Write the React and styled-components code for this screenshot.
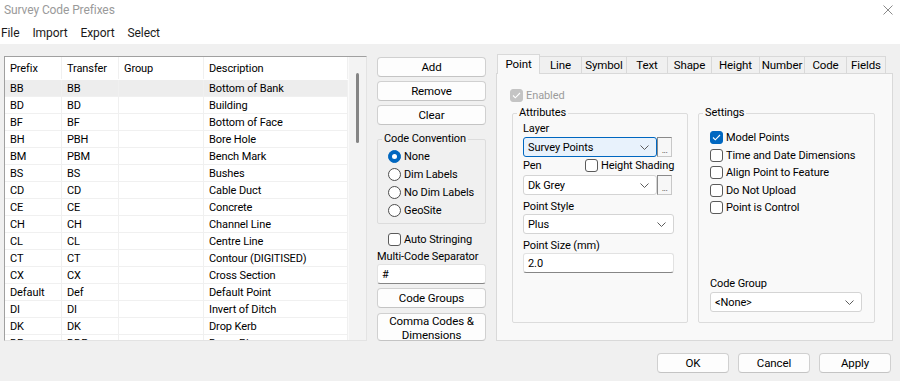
import React from "react";
import styled, { createGlobalStyle } from "styled-components";

const FONT = `"Segoe UI", Roboto, "Noto Sans", sans-serif`;

const GlobalStyle = createGlobalStyle`
  html, body {
    margin: 0;
    padding: 0;
    background: #f0f0f0;
  }
  * {
    box-sizing: border-box;
  }
`;

const rows = [
  ["BB", "BB", "", "Bottom of Bank"],
  ["BD", "BD", "", "Building"],
  ["BF", "BF", "", "Bottom of Face"],
  ["BH", "PBH", "", "Bore Hole"],
  ["BM", "PBM", "", "Bench Mark"],
  ["BS", "BS", "", "Bushes"],
  ["CD", "CD", "", "Cable Duct"],
  ["CE", "CE", "", "Concrete"],
  ["CH", "CH", "", "Channel Line"],
  ["CL", "CL", "", "Centre Line"],
  ["CT", "CT", "", "Contour (DIGITISED)"],
  ["CX", "CX", "", "Cross Section"],
  ["Default", "Def", "", "Default Point"],
  ["DI", "DI", "", "Invert of Ditch"],
  ["DK", "DK", "", "Drop Kerb"],
  ["DP", "DDP", "", "Down Pipe"],
];

const columns = [
  { label: "Prefix", width: 57 },
  { label: "Transfer", width: 57 },
  { label: "Group", width: 85 },
  { label: "Description", width: 144 },
];

const tabs = [
  { label: "Point", width: 43 },
  { label: "Line", width: 43 },
  { label: "Symbol", width: 46 },
  { label: "Text", width: 42 },
  { label: "Shape", width: 45 },
  { label: "Height", width: 49 },
  { label: "Number", width: 46 },
  { label: "Code", width: 43 },
  { label: "Fields", width: 40 },
];

const Window = styled.div`
  width: 900px;
  height: 381px;
  overflow: hidden;
  background: #f0f0f0;
  font-family: ${FONT};
  font-size: 11px;
  letter-spacing: -0.1px;
  color: #000;
  display: flex;
  flex-direction: column;
`;

const TitleBar = styled.div`
  height: 22px;
  background: #fff;
  display: flex;
  align-items: center;
  justify-content: space-between;
  padding: 0 7px 3px 4px;
  color: #9a9a9a;
  font-size: 12px;
`;

const MenuBar = styled.div`
  height: 22px;
  background: #fff;
  display: flex;
  align-items: center;
  gap: 13px;
  padding-left: 1px;
  font-size: 12px;
  color: #1a1a1a;
`;

const Body = styled.div`
  padding: 10px 0 0 4px;
  display: flex;
  flex-direction: column;
`;

const MainRow = styled.div`
  display: flex;
  align-items: flex-start;
  height: 287px;
`;

/* ---------- list ---------- */

const ListBox = styled.div`
  margin-top: 2px;
  width: 363px;
  height: 285px;
  background: #fff;
  border: 1px solid #e3e3e3;
  border-top-color: #a0a0a0;
  border-left-color: #a0a0a0;
  display: flex;
  overflow: hidden;
`;

const Table = styled.div`
  width: 343px;
  display: flex;
  flex-direction: column;
`;

const Row = styled.div`
  display: flex;
  flex: none;
  height: ${(p) => (p.$header ? 23 : 17)}px;
  background: ${(p) => (p.$selected ? "#ededed" : "#fff")};
  border-bottom: 1px solid ${(p) => (p.$header ? "transparent" : "#f0f0f0")};
`;

const Cell = styled.div`
  width: ${(p) => p.$w}px;
  flex: none;
  padding-left: 5px;
  display: flex;
  align-items: center;
  white-space: nowrap;
  overflow: hidden;
  border-right: 1px solid #f0f0f0;
`;

const ScrollBar = styled.div`
  width: 18px;
  flex: none;
  background: #f3f3f3;
  border-left: 1px solid #fafafa;
`;

const Thumb = styled.div`
  width: 3px;
  height: 70px;
  margin: 16px auto 0;
  border-radius: 2px;
  background: #858585;
`;

/* ---------- buttons and inputs ---------- */

const Button = styled.button`
  display: block;
  width: ${(p) => (p.$w ? `${p.$w}px` : "100%")};
  height: ${(p) => p.$h || 20}px;
  margin-top: ${(p) => p.$mt || 0}px;
  padding: 0;
  background: #fdfdfd;
  border: 1px solid #d0d0d0;
  border-bottom-color: #c4c4c4;
  border-radius: 4px;
  font-family: ${FONT};
  font-size: 11.5px;
  letter-spacing: -0.1px;
  line-height: 14px;
  color: #000;
  text-align: center;
`;

const TextBox = styled.div`
  height: 20px;
  width: ${(p) => (p.$w ? `${p.$w}px` : "100%")};
  background: #fff;
  border: 1px solid #e2e2e2;
  border-bottom-color: #868686;
  border-radius: 3px;
  padding-left: 4px;
  display: flex;
  align-items: center;
`;

const Combo = styled.div`
  height: 20px;
  width: ${(p) => p.$w}px;
  flex: none;
  background: ${(p) => (p.$focus ? "#e8f2fc" : "#fff")};
  border: 1px solid ${(p) => (p.$focus ? "#0067c0" : "#d4d4d4")};
  border-radius: 3px;
  padding: 0 7px 0 4px;
  display: flex;
  align-items: center;
  justify-content: space-between;
`;

const Chevron = () => (
  <svg width="9" height="5" viewBox="0 0 9 5">
    <polyline points="0.5,0.5 4.5,4.5 8.5,0.5" fill="none" stroke="#5c5c5c" strokeWidth="1" />
  </svg>
);

const DotsButton = styled.div`
  width: 15px;
  height: 20px;
  flex: none;
  background: #f7f7f7;
  border: 1px solid #8a8a8a;
  border-right-color: #c8c8c8;
  border-bottom-color: #c8c8c8;
  display: flex;
  align-items: flex-end;
  justify-content: center;
  font-size: 9px;
  line-height: 12px;
  letter-spacing: -0.5px;
  color: #333;
`;

const ComboRow = styled.div`
  display: flex;
  margin-top: ${(p) => p.$mt || 0}px;
`;

/* ---------- check and radio ---------- */

const Box = styled.span`
  width: 13px;
  height: 13px;
  flex: none;
  border-radius: 3px;
  border: 1px solid ${(p) => (p.$disabled ? "#c4c4c4" : p.$checked ? "#0067c0" : "#5a5a5a")};
  background: ${(p) => (p.$disabled ? "#c4c4c4" : p.$checked ? "#0067c0" : "#fff")};
  display: flex;
  align-items: center;
  justify-content: center;
`;

const CheckRow = styled.div`
  display: flex;
  align-items: center;
  gap: 3px;
  flex: none;
  height: ${(p) => p.$h || 17}px;
  margin-top: ${(p) => p.$mt || 0}px;
  padding-left: ${(p) => p.$pl || 0}px;
  color: ${(p) => (p.$disabled ? "#9c9c9c" : "#000")};
  white-space: nowrap;
`;

const Check = ({ checked, disabled, children, ...rest }) => (
  <CheckRow $disabled={disabled} {...rest}>
    <Box $checked={checked} $disabled={disabled}>
      {checked && (
        <svg width="9" height="7" viewBox="0 0 9 7">
          <polyline points="1,3.5 3.3,5.8 8,1" fill="none" stroke="#fff" strokeWidth="1.1" />
        </svg>
      )}
    </Box>
    <span>{children}</span>
  </CheckRow>
);

const Circle = styled.span`
  width: 13px;
  height: 13px;
  flex: none;
  border-radius: 50%;
  border: 1px solid ${(p) => (p.$on ? "#0067c0" : "#4d4d4d")};
  background: ${(p) => (p.$on ? "#0067c0" : "#fff")};
  display: flex;
  align-items: center;
  justify-content: center;

  &::after {
    content: "";
    display: ${(p) => (p.$on ? "block" : "none")};
    width: 5px;
    height: 5px;
    border-radius: 50%;
    background: #fff;
  }
`;

const Radio = ({ on, children }) => (
  <CheckRow $h={18}>
    <Circle $on={on} />
    <span>{children}</span>
  </CheckRow>
);

/* ---------- group boxes ---------- */

const Group = styled.fieldset`
  margin: ${(p) => p.$mt || 0}px 0 0;
  padding: 0;
  width: ${(p) => (p.$w ? `${p.$w}px` : "auto")};
  height: ${(p) => (p.$h ? `${p.$h}px` : "auto")};
  min-width: 0;
  border: 1px solid #dcdcdc;
  border-radius: 2px;
  display: flex;
  flex-direction: column;
`;

const Legend = styled.legend`
  margin-left: 4px;
  padding: 0 2px;
  line-height: 16px;
  font-size: 11px;
`;

const GroupBody = styled.div`
  flex: 1;
  display: flex;
  flex-direction: column;
  padding: 0 ${(p) => p.$pr || 0}px ${(p) => p.$pb || 0}px ${(p) => p.$pl || 0}px;
`;

const Label = styled.div`
  line-height: 15px;
  height: 15px;
  flex: none;
  margin-top: ${(p) => p.$mt || 0}px;
  white-space: nowrap;
`;

const PenLabel = styled.span`
  width: 59px;
  flex: none;
`;

/* ---------- middle column ---------- */

const Middle = styled.div`
  width: 109px;
  margin-left: 10px;
  padding-top: 3px;
  display: flex;
  flex-direction: column;
`;

/* ---------- tabs ---------- */

const RightCol = styled.div`
  width: 397px;
  margin-left: 10px;
  display: flex;
  flex-direction: column;
`;

const TabStrip = styled.div`
  height: 19px;
  display: flex;
  align-items: flex-end;
  padding-left: 2px;
`;

const Tab = styled.div`
  position: relative;
  width: ${(p) => p.$w}px;
  height: ${(p) => (p.$active ? 20 : 17)}px;
  margin-left: -1px;
  margin-bottom: ${(p) => (p.$active ? -1 : 0)}px;
  z-index: ${(p) => (p.$active ? 1 : 0)};
  background: ${(p) => (p.$active ? "#f9f9f9" : "#f0f0f0")};
  border: 1px solid #d9d9d9;
  border-bottom: none;
  display: flex;
  align-items: ${(p) => (p.$active ? "flex-start" : "center")};
  justify-content: center;
  padding-top: ${(p) => (p.$active ? 2 : 0)}px;
  font-size: 11.5px;
`;

const Panel = styled.div`
  height: 268px;
  background: #f9f9f9;
  border: 1px solid #d9d9d9;
  padding: 14px 0 0 13px;
`;

const GroupsRow = styled.div`
  display: flex;
  gap: 10px;
  margin: 3px 0 0 2px;
`;

const Spacer = styled.div`
  margin-top: auto;
`;

/* ---------- footer ---------- */

const Footer = styled.div`
  display: flex;
  justify-content: flex-end;
  gap: 9px;
  padding-right: 9px;
  margin-top: 12px;
`;

const CloseIcon = () => (
  <svg width="10" height="10" viewBox="0 0 10 10">
    <path d="M0.5 0.5 L9.5 9.5 M9.5 0.5 L0.5 9.5" stroke="#8a8a8a" strokeWidth="1" />
  </svg>
);

export default function App() {
  return (
    <>
      <GlobalStyle />
      <Window>
        <TitleBar>
          <span>Survey Code Prefixes</span>
          <CloseIcon />
        </TitleBar>
        <MenuBar>
          <span>File</span>
          <span>Import</span>
          <span>Export</span>
          <span>Select</span>
        </MenuBar>

        <Body>
          <MainRow>
            <ListBox>
              <Table>
                <Row $header>
                  {columns.map((c) => (
                    <Cell key={c.label} $w={c.width}>
                      {c.label}
                    </Cell>
                  ))}
                </Row>
                {rows.map((r, i) => (
                  <Row key={r[0]} $selected={i === 0}>
                    {r.map((v, j) => (
                      <Cell key={j} $w={columns[j].width}>
                        {v}
                      </Cell>
                    ))}
                  </Row>
                ))}
              </Table>
              <ScrollBar>
                <Thumb />
              </ScrollBar>
            </ListBox>

            <Middle>
              <Button>Add</Button>
              <Button $mt={4}>Remove</Button>
              <Button $mt={4}>Clear</Button>
              <Group $mt={6}>
                <Legend>Code Convention</Legend>
                <GroupBody $pl={10} $pb={4}>
                  <Radio on>None</Radio>
                  <Radio>Dim Labels</Radio>
                  <Radio>No Dim Labels</Radio>
                  <Radio>GeoSite</Radio>
                </GroupBody>
              </Group>
              <Check $mt={6} $h={18} $pl={11}>
                Auto Stringing
              </Check>
              <Label $mt={1}>Multi-Code Separator</Label>
              <TextBox>#</TextBox>
              <Button $mt={4}>Code Groups</Button>
              <Button $mt={5} $h={28}>
                Comma Codes &amp;
                <br />
                Dimensions
              </Button>
            </Middle>

            <RightCol>
              <TabStrip>
                {tabs.map((t, i) => (
                  <Tab key={t.label} $w={t.width} $active={i === 0}>
                    {t.label}
                  </Tab>
                ))}
              </TabStrip>
              <Panel>
                <Check checked disabled $h={14}>
                  Enabled
                </Check>
                <GroupsRow>
                  <Group $w={176} $h={218}>
                    <Legend>Attributes</Legend>
                    <GroupBody $pl={10} $pr={13}>
                      <Label>Layer</Label>
                      <ComboRow $mt={1}>
                        <Combo $w={134} $focus>
                          <span>Survey Points</span>
                          <Chevron />
                        </Combo>
                        <DotsButton>...</DotsButton>
                      </ComboRow>
                      <CheckRow $h={17}>
                        <PenLabel>Pen</PenLabel>
                        <Check>Height Shading</Check>
                      </CheckRow>
                      <ComboRow $mt={1}>
                        <Combo $w={134}>
                          <span>Dk Grey</span>
                          <Chevron />
                        </Combo>
                        <DotsButton>...</DotsButton>
                      </ComboRow>
                      <Label $mt={4}>Point Style</Label>
                      <ComboRow>
                        <Combo $w={151}>
                          <span>Plus</span>
                          <Chevron />
                        </Combo>
                      </ComboRow>
                      <Label $mt={4}>Point Size (mm)</Label>
                      <TextBox $w={151}>2.0</TextBox>
                    </GroupBody>
                  </Group>

                  <Group $w={177} $h={218}>
                    <Legend>Settings</Legend>
                    <GroupBody $pl={11} $pr={12} $pb={10}>
                      <Check checked $mt={8} $h={17.5}>
                        Model Points
                      </Check>
                      <Check $h={17.5}>Time and Date Dimensions</Check>
                      <Check $h={17.5}>Align Point to Feature</Check>
                      <Check $h={17.5}>Do Not Upload</Check>
                      <Check $h={17.5}>Point is Control</Check>
                      <Spacer />
                      <Label>Code Group</Label>
                      <ComboRow $mt={1}>
                        <Combo $w={152}>
                          <span>&lt;None&gt;</span>
                          <Chevron />
                        </Combo>
                      </ComboRow>
                    </GroupBody>
                  </Group>
                </GroupsRow>
              </Panel>
            </RightCol>
          </MainRow>

          <Footer>
            <Button $w={72}>OK</Button>
            <Button $w={72}>Cancel</Button>
            <Button $w={72}>Apply</Button>
          </Footer>
        </Body>
      </Window>
    </>
  );
}
